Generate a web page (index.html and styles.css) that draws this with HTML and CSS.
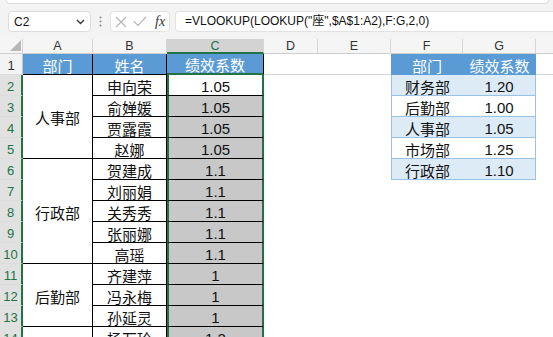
FILE: index.html
```html
<!DOCTYPE html>
<html lang="zh-CN">
<head>
    <meta charset="UTF-8">
    <meta name="viewport" content="width=device-width, initial-scale=1.0">
    <title>绩效系数</title>
    <link rel="stylesheet" href="styles.css">
</head>
<body>
    <div class="ribbon-edge"></div>

    <div class="formula-row">
        <div class="name-box">
            <span>C2</span>
            <svg width="9" height="6" viewBox="0 0 9 6"><path d="M1 1 L4.5 4.5 L8 1" fill="none" stroke="#333" stroke-width="1.3"/></svg>
        </div>
        <div class="grip">
            <svg width="3" height="11" viewBox="0 0 3 11"><circle cx="1.5" cy="1.5" r="1" fill="#888"/><circle cx="1.5" cy="5.5" r="1" fill="#888"/><circle cx="1.5" cy="9.5" r="1" fill="#888"/></svg>
        </div>
        <div class="fx-box">
            <svg width="12" height="12" viewBox="0 0 12 12"><path d="M1 1 L11 11 M11 1 L1 11" stroke="#b4b4b4" stroke-width="1.1"/></svg>
            <svg width="14" height="11" viewBox="0 0 14 11"><path d="M1 5.5 L5 9.5 L13 1" fill="none" stroke="#b4b4b4" stroke-width="1.1"/></svg>
            <span class="fx">fx</span>
        </div>
        <div class="formula">=VLOOKUP(LOOKUP("座",$A$1:A2),F:G,2,0)</div>
    </div>

    <div class="sheet">
        <!-- column headers -->
        <div class="corner">
            <svg width="11" height="11" viewBox="0 0 11 11"><polygon points="11,0 11,11 0,11" fill="#b8b8b8"/></svg>
        </div>
        <div class="ch">A</div>
        <div class="ch">B</div>
        <div class="ch sel">C</div>
        <div class="ch">D</div>
        <div class="ch">E</div>
        <div class="ch">F</div>
        <div class="ch">G</div>
        <div class="ch last"></div>

        <!-- row 1 -->
        <div class="rh">1</div>
        <div class="hd">部门</div>
        <div class="hd">姓名</div>
        <div class="hd c1">绩效系数</div>
        <div class="grid-line"></div>
        <div class="grid-line"></div>
        <div class="th">部门</div>
        <div class="th">绩效系数</div>
        <div class="grid-line"></div>

        <!-- row 2 -->
        <div class="rh sel">2</div>
        <div class="dept span4">人事部</div>
        <div class="name">申向荣</div>
        <div class="val active">1.05</div>
        <div class="tf alt">财务部</div>
        <div class="tg alt">1.20</div>

        <div class="rh sel">3</div>
        <div class="name">俞婵媛</div>
        <div class="val">1.05</div>
        <div class="tf">后勤部</div>
        <div class="tg">1.00</div>

        <div class="rh sel">4</div>
        <div class="name">贾露霞</div>
        <div class="val">1.05</div>
        <div class="tf alt">人事部</div>
        <div class="tg alt">1.05</div>

        <div class="rh sel">5</div>
        <div class="name">赵娜</div>
        <div class="val">1.05</div>
        <div class="tf">市场部</div>
        <div class="tg">1.25</div>

        <div class="rh sel">6</div>
        <div class="dept span5">行政部</div>
        <div class="name">贺建成</div>
        <div class="val">1.1</div>
        <div class="tf alt">行政部</div>
        <div class="tg alt">1.10</div>

        <div class="rh sel">7</div>
        <div class="name">刘丽娟</div>
        <div class="val">1.1</div>

        <div class="rh sel">8</div>
        <div class="name">关秀秀</div>
        <div class="val">1.1</div>

        <div class="rh sel">9</div>
        <div class="name">张丽娜</div>
        <div class="val">1.1</div>

        <div class="rh sel">10</div>
        <div class="name">高瑶</div>
        <div class="val">1.1</div>

        <div class="rh sel">11</div>
        <div class="dept span3">后勤部</div>
        <div class="name">齐建萍</div>
        <div class="val">1</div>

        <div class="rh sel">12</div>
        <div class="name">冯永梅</div>
        <div class="val">1</div>

        <div class="rh sel">13</div>
        <div class="name">孙延灵</div>
        <div class="val">1</div>

        <div class="rh sel">14</div>
        <div class="dept"></div>
        <div class="name">杨万玲</div>
        <div class="val">1.2</div>
    </div>
</body>
</html>
```

FILE: styles.css
```css
body {
    margin: 0;
    height: 337px;
    overflow: hidden;
    background-color: #f3f3f3;
    font-family: "Liberation Sans", "Noto Sans CJK SC", sans-serif;
    color: #111;
}

.ribbon-edge {
    height: 3px;
    margin: 0 4px 0 6px;
    background-color: #fff;
    border: 1px solid #e0e0e0;
    border-top: none;
    border-radius: 0 0 6px 6px;
}

.formula-row {
    display: flex;
    align-items: center;
    height: 21px;
    margin: 7px 0 7px 8px;
}

.name-box {
    box-sizing: border-box;
    width: 83px;
    height: 21px;
    display: flex;
    align-items: center;
    justify-content: space-between;
    padding: 0 5px 0 5px;
    background-color: #fff;
    border: 1px solid #dcdcdc;
    border-radius: 4px;
    font-size: 12px;
}

.grip {
    width: 19px;
    display: flex;
    justify-content: center;
}

.fx-box {
    box-sizing: border-box;
    width: 60px;
    height: 21px;
    display: flex;
    align-items: center;
    gap: 6px;
    padding-left: 4px;
    background-color: #fff;
    border: 1px solid #e2e2e2;
    border-radius: 4px;
}

.fx {
    font-family: "Liberation Serif", serif;
    font-style: italic;
    font-size: 14px;
    color: #333;
    margin-left: 2px;
}

.formula {
    box-sizing: border-box;
    flex: 1;
    height: 21px;
    margin-left: 5px;
    padding-left: 9px;
    line-height: 19px;
    background-color: #fff;
    border: 1px solid #e2e2e2;
    border-right: none;
    border-radius: 4px 0 0 4px;
    font-size: 12px;
    white-space: nowrap;
}

/* sheet grid */
.sheet {
    display: grid;
    grid-template-columns: 23px 70px 74px 97px 54px 73px 72px 73px 1fr;
    grid-template-rows: 15px;
    grid-auto-rows: 21px;
    background-color: #fff;
}

.sheet > div {
    box-sizing: border-box;
    display: flex;
    align-items: center;
    justify-content: center;
    padding-top: 2px;
    font-size: 15px;
    white-space: nowrap;
    overflow: hidden;
}

.corner {
    background-color: #f5f5f5;
    border-right: 1px solid #d6d6d6;
    border-bottom: 1px solid #cfcfcf;
    justify-content: flex-end !important;
    align-items: flex-end !important;
    padding: 0 1px 2px 0 !important;
}

.sheet > .ch {
    padding-top: 0;
    background-color: #f5f5f5;
    border-right: 1px solid #d6d6d6;
    border-bottom: 1px solid #cfcfcf;
    font-size: 12.5px;
    color: #333;
}

.sheet > .ch.sel {
    background-color: #d3d3d3;
    color: #217346;
    border-bottom: 2px solid #217346;
}

.ch.last {
    border-right: none;
}

.sheet > .rh {
    grid-column: 1;
    background-color: #f3f3f3;
    border-right: 1px solid #c6c6c6;
    border-bottom: 1px solid #dcdcdc;
    font-size: 13px;
    color: #333;
}

.sheet > .rh.sel {
    background-color: #e1e1e1;
    color: #217346;
    border-right: 2px solid #217346;
}

.hd {
    background-color: #5b9bd5;
    color: #fff;
    border-right: 1px solid #000;
    border-bottom: 1px solid #000;
}

.hd.c1 {
    border-bottom: 2px solid #217346;
}

.grid-line {
    border-bottom: 1px solid #d4d4d4;
}

.th {
    background-color: #5b9bd5;
    color: #fff;
}

.dept {
    border-right: 1px solid #000;
    border-bottom: 1px solid #000;
}

.span3 { grid-row: span 3; }
.span4 { grid-row: span 4; }
.span5 { grid-row: span 5; }

.name {
    border-right: 1px solid #000;
    border-bottom: 1px solid #000;
}

.val {
    background-color: #c8c8c8;
    border-left: 2px solid #217346;
    border-right: 2px solid #217346;
    border-bottom: 1px solid #000;
}

.val.active {
    background-color: #fff;
}

.tf,
.tg {
    border-bottom: 1px solid #9bc2e6;
}

.tf {
    grid-column: 7;
    border-left: 1px solid #9bc2e6;
}

.tg {
    border-right: 1px solid #9bc2e6;
}

.alt {
    background-color: #ddebf7;
}
```
